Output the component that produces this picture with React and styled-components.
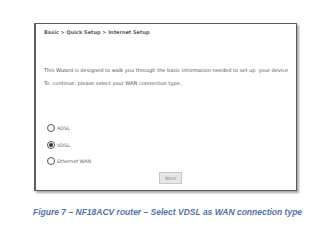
import React from "react";
import styled, { createGlobalStyle } from "styled-components";

const Global = createGlobalStyle`
  html, body { margin: 0; padding: 0; background: #fff; }
  body { width: 327px; height: 246px; overflow: hidden; }
`;

const Page = styled.div`
  padding: 23px 0 0 34px;
  font-family: "DejaVu Sans", Verdana, sans-serif;
`;

const Panel = styled.div`
  box-sizing: border-box;
  width: 263px;
  border: 1.5px solid #5c5c5c;
  border-left-width: 2px;
  box-shadow: 2px 2px 2px rgba(0, 0, 0, 0.35);
  padding: 5px 8px 6px 8px;
  display: flex;
  flex-direction: column;
`;

const Crumb = styled.div`
  font-size: 5px;
  line-height: 6px;
  font-weight: bold;
  color: #56606e;
`;

const Intro = styled.div`
  margin-top: 31px;
  display: flex;
  flex-direction: column;
  gap: 5px;
`;

const Line = styled.div`
  font-size: 5.05px;
  line-height: 8px;
  color: #555;
  white-space: pre;
`;

const Options = styled.div`
  margin-top: 36px;
  display: flex;
  flex-direction: column;
  gap: 6.5px;
  padding-left: 3px;
`;

const Option = styled.div`
  display: flex;
  align-items: center;
  gap: 2px;
  height: 10px;
`;

const Dot = styled.span`
  box-sizing: border-box;
  width: 8px;
  height: 8px;
  border-radius: 50%;
  border: 1px solid #555;
  background: #fff;
  display: flex;
  align-items: center;
  justify-content: center;
  &::after {
    content: "";
    width: 4px;
    height: 4px;
    border-radius: 50%;
    background: ${(p) => (p.$on ? "#333" : "transparent")};
  }
`;

const OptLabel = styled.span`
  font-size: 4.9px;
  color: #666;
`;

const ButtonRow = styled.div`
  margin-top: 6px;
  padding-left: 115px;
  display: flex;
`;

const Button = styled.div`
  box-sizing: border-box;
  width: 23px;
  height: 12px;
  background: #e6e6e6;
  border: 1px solid #c8c8c8;
  display: flex;
  align-items: center;
  justify-content: center;
  font-size: 4.8px;
  color: #8a8a8a;
`;

const Caption = styled.div`
  margin-top: 16px;
  margin-left: -1px;
  font-family: "Liberation Sans", Arial, sans-serif;
  font-style: italic;
  font-weight: bold;
  font-size: 8.5px;
  line-height: 10px;
  color: #5273a8;
  white-space: nowrap;
`;

export default function App() {
  return (
    <>
      <Global />
      <Page>
        <Panel>
          <Crumb>Basic &gt; Quick Setup &gt; Internet Setup</Crumb>
          <Intro>
            <Line>This Wizard is designed to walk you through the basic information needed to set up  your device</Line>
            <Line>To  continue, please select your WAN connection type.</Line>
          </Intro>
          <Options>
            <Option><Dot /><OptLabel>ADSL</OptLabel></Option>
            <Option><Dot $on /><OptLabel>VDSL</OptLabel></Option>
            <Option><Dot /><OptLabel>Ethernet WAN</OptLabel></Option>
          </Options>
          <ButtonRow><Button>Next</Button></ButtonRow>
        </Panel>
        <Caption>Figure 7 – NF18ACV router – Select VDSL as WAN connection type</Caption>
      </Page>
    </>
  );
}
